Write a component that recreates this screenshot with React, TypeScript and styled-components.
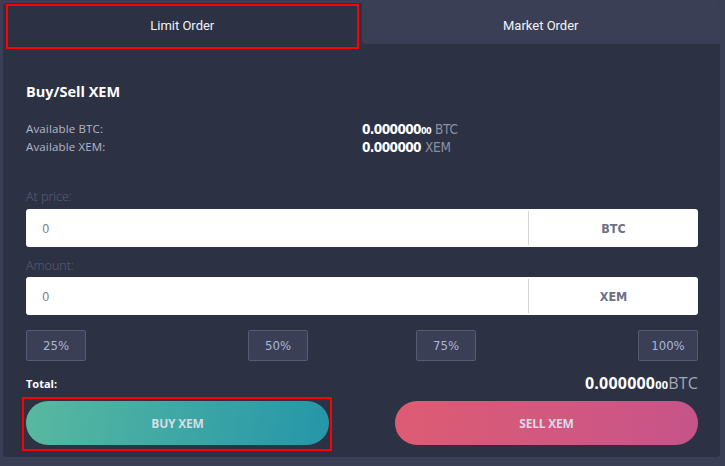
import React from "react";
import styled, { createGlobalStyle } from "styled-components";

const Global = createGlobalStyle`
  html, body { margin: 0; padding: 0; background: #3a3f55; }
  body { width: 725px; height: 466px; overflow: hidden; font-family: "Open Sans", "Noto Sans", sans-serif; }
  #root { padding: 3px 5px 0 3px; box-sizing: border-box; width: 725px; }
`;

const Panel = styled.div`
  background: #2d3144;
  border-radius: 4px;
  width: 717px;
  overflow: hidden;
`;

const Tabs = styled.div`
  display: flex;
  height: 42px;
`;

const Tab = styled.div<{ $active?: boolean }>`
  position: relative;
  flex: 1;
  display: flex;
  align-items: center;
  justify-content: center;
  padding-top: ${(p) => (p.$active ? "2px" : "6px")};
  box-sizing: border-box;
  font-family: Roboto, "Open Sans", sans-serif;
  font-size: 13px;
  color: #f2f3f7;
  background: ${(p) => (p.$active ? "transparent" : "#3a3f55")};
  border-bottom-left-radius: ${(p) => (p.$active ? "0" : "4px")};
  margin-top: ${(p) => (p.$active ? "0" : "-3px")};
  height: ${(p) => (p.$active ? "42px" : "44px")};
`;

const Highlight = styled.div<{ $t: number; $r: number; $b: number; $l: number }>`
  position: absolute;
  top: ${(p) => p.$t}px;
  right: ${(p) => p.$r}px;
  bottom: ${(p) => p.$b}px;
  left: ${(p) => p.$l}px;
  border: 2px solid #ff0000;
  pointer-events: none;
`;

const Body = styled.div`
  padding: 37px 22px 12px 23px;
`;

const Title = styled.div`
  font-family: "Open Sans", sans-serif;
  font-weight: 700;
  font-size: 14.5px;
  line-height: 20px;
  color: #ffffff;
`;

const InfoList = styled.div`
  margin-top: 15px;
  display: flex;
  flex-direction: column;
`;

const InfoRow = styled.div`
  display: grid;
  grid-template-columns: 336px 1fr;
  height: 18px;
  align-items: center;
`;

const InfoLabel = styled.span`
  font-size: 11.5px;
  letter-spacing: 0.15px;
  color: #b4b8c7;
`;

const Narrow = `"DejaVu Sans", sans-serif`;

const Value = styled.span`
  font-family: ${Narrow};
  font-stretch: condensed;
  font-weight: 700;
  font-size: 13.5px;
  color: #ffffff;
  letter-spacing: -0.6px;
`;

const Small = styled.span`
  font-size: 9px;
  color: #ffffff;
`;

const Unit = styled.span`
  font-family: ${Narrow};
  font-stretch: condensed;
  font-weight: 400;
  font-size: 13.5px;
  color: #8b90a1;
  margin-left: 4px;
  letter-spacing: -0.3px;
`;

const FieldLabel = styled.div<{ $mt: number }>`
  margin-top: ${(p) => p.$mt}px;
  font-size: 12.5px;
  font-weight: 300;
  line-height: 18px;
  color: #5b6178;
`;

const InputBox = styled.div<{ $mt: number }>`
  margin-top: ${(p) => p.$mt}px;
  height: 38px;
  background: #ffffff;
  border-radius: 3px;
  display: grid;
  grid-template-columns: 503px 1fr;
  align-items: stretch;
`;

const InputValue = styled.div`
  display: flex;
  align-items: center;
  padding-left: 16px;
  font-family: ${Narrow};
  font-stretch: condensed;
  font-size: 13px;
  color: #7a8196;
  border-right: 1px solid #d4d4d8;
  margin: 2px 0;
`;

const InputUnit = styled.div`
  display: flex;
  align-items: center;
  justify-content: center;
  font-family: ${Narrow};
  font-stretch: condensed;
  font-weight: 700;
  font-size: 12.5px;
  color: #6c7183;
`;

const PctRow = styled.div`
  margin-top: 15px;
  display: grid;
  grid-template-columns: repeat(4, 1fr);
`;

const PctButton = styled.button<{ $align: string }>`
  justify-self: ${(p) => p.$align};
  width: 60px;
  height: 31px;
  background: #3a3f56;
  border: 1px solid #575c73;
  border-radius: 2px;
  font-family: ${Narrow};
  font-stretch: condensed;
  font-size: 13px;
  color: #aab6d4;
  padding: 0;
  cursor: pointer;
`;

const TotalRow = styled.div`
  margin-top: 13px;
  height: 18px;
  display: flex;
  align-items: center;
  justify-content: space-between;
`;

const TotalLabel = styled.span`
  font-size: 11px;
  font-weight: 700;
  color: #ffffff;
`;

const TotalValue = styled.span`
  font-family: "Open Sans", sans-serif;
  font-weight: 700;
  font-size: 16px;
  color: #ffffff;
  letter-spacing: 0.2px;
`;

const TotalSmall = styled.span`
  font-size: 11px;
`;

const TotalUnit = styled.span`
  font-weight: 400;
  color: #a3a8b9;
`;

const Actions = styled.div`
  margin-top: 9px;
  display: flex;
  justify-content: space-between;
`;

const ActionWrap = styled.div`
  position: relative;
  width: 303px;
`;

const ActionButton = styled.button<{ $kind: "buy" | "sell" }>`
  width: 100%;
  height: 44px;
  border: none;
  border-radius: 22px;
  background: ${(p) =>
    p.$kind === "buy"
      ? "linear-gradient(100deg, #59b9a0 0%, #2596a9 100%)"
      : "linear-gradient(100deg, #de5c73 0%, #c6548a 100%)"};
  font-family: "Open Sans", sans-serif;
  font-weight: 700;
  font-size: 12px;
  color: #d6dde6;
  letter-spacing: -0.2px;
  cursor: pointer;
`;

export default function App() {
  return (
    <>
      <Global />
      <Panel>
        <Tabs>
          <Tab $active>
            Limit Order
            <Highlight $t={1} $r={3} $b={-4} $l={3} />
          </Tab>
          <Tab>Market Order</Tab>
        </Tabs>
        <Body>
          <Title>Buy/Sell XEM</Title>
          <InfoList>
            <InfoRow>
              <InfoLabel>Available BTC:</InfoLabel>
              <span>
                <Value>
                  0.000000<Small>00</Small>
                </Value>
                <Unit>BTC</Unit>
              </span>
            </InfoRow>
            <InfoRow>
              <InfoLabel>Available XEM:</InfoLabel>
              <span>
                <Value>0.000000</Value>
                <Unit>XEM</Unit>
              </span>
            </InfoRow>
          </InfoList>

          <FieldLabel $mt={35}>At price:</FieldLabel>
          <InputBox $mt={3}>
            <InputValue>0</InputValue>
            <InputUnit>BTC</InputUnit>
          </InputBox>

          <FieldLabel $mt={10}>Amount:</FieldLabel>
          <InputBox $mt={2}>
            <InputValue>0</InputValue>
            <InputUnit>XEM</InputUnit>
          </InputBox>

          <PctRow>
            <PctButton $align="start">25%</PctButton>
            <PctButton $align="center">50%</PctButton>
            <PctButton $align="center">75%</PctButton>
            <PctButton $align="end">100%</PctButton>
          </PctRow>

          <TotalRow>
            <TotalLabel>Total:</TotalLabel>
            <TotalValue>
              0.000000<TotalSmall>00</TotalSmall>
              <TotalUnit>BTC</TotalUnit>
            </TotalValue>
          </TotalRow>

          <Actions>
            <ActionWrap>
              <ActionButton $kind="buy">BUY XEM</ActionButton>
              <Highlight $t={-4} $r={-3} $b={-6} $l={-4} />
            </ActionWrap>
            <ActionWrap>
              <ActionButton $kind="sell">SELL XEM</ActionButton>
            </ActionWrap>
          </Actions>
        </Body>
      </Panel>
    </>
  );
}
